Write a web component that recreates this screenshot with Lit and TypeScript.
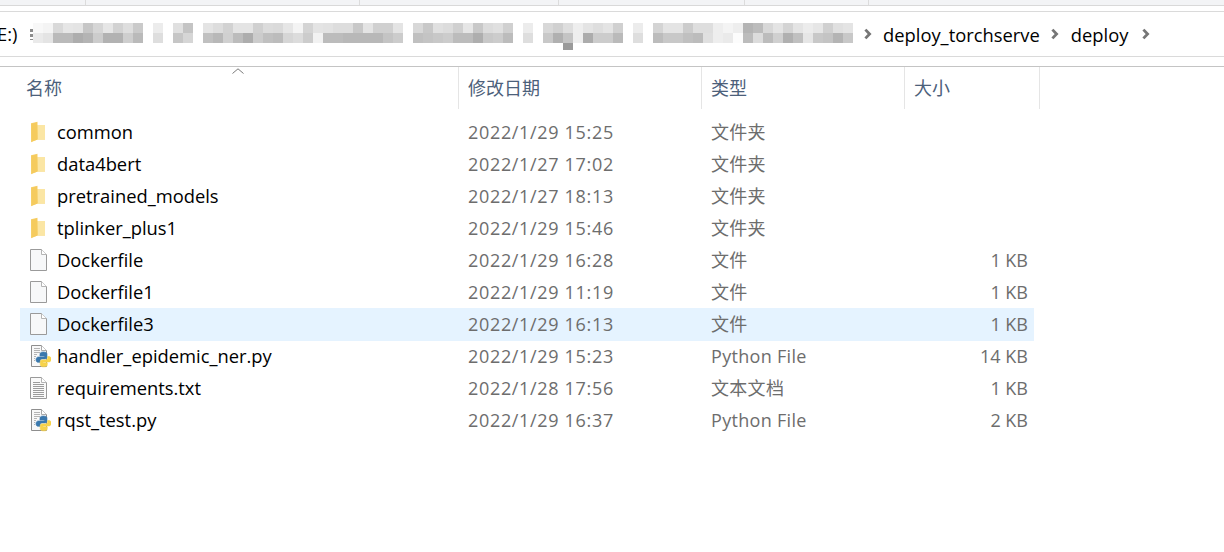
import { LitElement, html, css, svg } from "lit";
import { customElement } from "lit/decorators.js";

type Kind = "folder" | "file" | "py" | "txt";
const ROWS: { kind: Kind; name: string; date: string; type: string; size: string; sel?: boolean }[] = [
  { kind: "folder", name: "common", date: "2022/1/29 15:25", type: "文件夹", size: "" },
  { kind: "folder", name: "data4bert", date: "2022/1/27 17:02", type: "文件夹", size: "" },
  { kind: "folder", name: "pretrained_models", date: "2022/1/27 18:13", type: "文件夹", size: "" },
  { kind: "folder", name: "tplinker_plus1", date: "2022/1/29 15:46", type: "文件夹", size: "" },
  { kind: "file", name: "Dockerfile", date: "2022/1/29 16:28", type: "文件", size: "1 KB" },
  { kind: "file", name: "Dockerfile1", date: "2022/1/29 11:19", type: "文件", size: "1 KB" },
  { kind: "file", name: "Dockerfile3", date: "2022/1/29 16:13", type: "文件", size: "1 KB", sel: true },
  { kind: "py", name: "handler_epidemic_ner.py", date: "2022/1/29 15:23", type: "Python File", size: "14 KB" },
  { kind: "txt", name: "requirements.txt", date: "2022/1/28 17:56", type: "文本文档", size: "1 KB" },
  { kind: "py", name: "rqst_test.py", date: "2022/1/29 16:37", type: "Python File", size: "2 KB" },
];

const BLUR_TOP = (
  "f8 f4 d9 e6 e4 c6 d6 e6 d2 de ca ff ec ff e0 c4 ff e4 dd d2 e4 e4 d0 dc da e6 f4 d4 e4 e2 dd dd c8 e4 d0 d0 e4 ff d8 " +
  "c8 e0 dc d0 e6 c8 dc e0 d0 ff ec ff d8 d0 de ee e4 de e4 d0 ff ec ff d4 e4 e4 cc de de ee f4 ee b4 bc d8 e4 d4 e4 ec e6 d0 e0 e4"
).split(" ");
const BLUR_BOT = (
  "ea e4 ba ba ad b4 cc b2 b2 ce ba ff de ff c6 d6 ff c0 b8 d0 bc ad cc c0 bc d6 dc cc f2 bc bc b8 b8 b8 b8 c4 cc ff c0 " +
  "c4 c8 cc bc bc ae c8 cc bc ff de ff c8 b0 c4 ee ac cc cc ba ff de ff bc c8 c8 c0 bc e0 ee ea fc bc dc bc d0 b0 c0 e6 c8 c4 b4 c8"
).split(" ");

const folderIcon = svg`<svg class="ic" viewBox="0 0 24 24" width="24" height="24">
  <path d="M4 3.2 L10.5 1.8 V5 H18 V19.6 H10.5 L4 22.2 Z" fill="#f7d06a"/>
  <path d="M10.5 5 H18 V19.6 H10.5 Z" fill="#fbe6a4"/>
  <path d="M4.6 3.7 L10 2.6 L10.6 19.4 L5 21.4 Z" fill="#f5cb5e"/>
</svg>`;
const fileIcon = svg`<svg class="ic" viewBox="0 0 24 24" width="24" height="24">
  <path d="M3.5 1.5 H14.5 L19.5 6.5 V22.5 H3.5 Z" fill="#f7f8f9" stroke="#9a9a9a"/>
  <path d="M14.5 1.5 V6.5 H19.5" fill="#fff" stroke="#b5b5b5"/>
</svg>`;
const txtLines = [6, 8, 10, 12, 14, 16, 18, 20];
const txtIcon = svg`<svg class="ic" viewBox="0 0 24 24" width="24" height="24">
  <path d="M3.5 1.5 H14.5 L19.5 6.5 V22.5 H3.5 Z" fill="#fafafa" stroke="#9a9a9a"/>
  <path d="M14.5 1.5 V6.5 H19.5" fill="#fff" stroke="#b5b5b5"/>
  ${txtLines.map((y) => svg`<rect x="6" y="${y}" width="${y < 8 ? 7 : 11}" height="1" fill="#9c9c9c"/>`)}
</svg>`;
const pyIcon = svg`<svg class="ic" viewBox="0 0 24 24" width="24" height="24">
  <path d="M4.5 1.5 H14.5 L19.5 6.5 V22.5 H4.5 Z" fill="#f8f8f8" stroke="#8e8e8e"/>
  <path d="M14.5 1.5 V6.5 H19.5" fill="#fff" stroke="#aaa"/>
  <path d="M7 4.5 H13 M7 6.5 H13 M7 8.5 H13 M7 10.5 H10 M7 12.5 H9 M7 14.5 H8 M7 16.5 H8" stroke="#b4b4b4"/>
  <g transform="translate(9 8) scale(.9) translate(-3.8 -7.5)">
    <path d="M12 7.5 C9 7.5 8.2 8.6 8.2 10 V12 H13 V13 H6.5 C4.8 13 3.8 14.3 3.8 16 C3.8 17.8 4.8 19 6.5 19 H8.4 V17.2 C8.4 16 9.4 15.2 10.5 15.2 H14 C15.2 15.2 16 14.4 16 13.4 V10 C16 8.4 14.6 7.5 12 7.5 Z" fill="#3a78ad" stroke="#3a78ad" stroke-width=".7"/>
    <path d="M12.5 24 C15.5 24 16.3 22.9 16.3 21.5 V19.5 H11.5 V18.5 H18 C19.7 18.5 20.7 17.2 20.7 15.5 C20.7 13.7 19.7 12.5 18 12.5 H16.8 V14.3 C16.8 15.5 15.8 16.3 14.7 16.3 H10.5 C9.3 16.3 8.5 17.1 8.5 18.1 V21.5 C8.5 23.1 9.9 24 12.5 24 Z" fill="#f7d34b" stroke="#f7d34b" stroke-width=".7"/>
  </g>
</svg>`;
const ICONS: Record<Kind, unknown> = { folder: folderIcon, file: fileIcon, txt: txtIcon, py: pyIcon };

const chevron = html`<svg class="chev" viewBox="0 0 8 12" width="8" height="12"><path d="M1.4 1.6 L5.6 6 L1.4 10.4" fill="none" stroke="#767676" stroke-width="2.8"/></svg>`;

@customElement("app-root")
export class AppRoot extends LitElement {
  static styles = css`
    :host {
      display: block;
      width: 1224px;
      height: 552px;
      overflow: hidden;
      background: #fff;
      font-family: "Open Sans", "Noto Sans CJK SC", sans-serif;
      font-size: 18px;
      color: #000;
    }
    .tabs {
      height: 5px;
      background: #f3f4f6;
      border-bottom: 1px solid #d9d9d9;
      display: grid;
      grid-template-columns: 86px 274px 199px 186px 124px 1fr;
    }
    .tabs span { border-right: 1px solid #dcdcdc; }
    .tabs span:last-child { border-right: 0; }
    .gap1 { height: 5px; border-bottom: 1px solid #dadada; }
    .addr {
      height: 44px;
      border-bottom: 1px solid #dadada;
      display: flex;
      align-items: center;
      overflow: hidden;
      white-space: nowrap;
      font-size: 18.35px;
    }
    .drive { margin-left: -3px; width: 36px; flex: none; line-height: 44px; position: relative; }
    .dots { position: absolute; left: 33px; top: 17px; width: 3px; height: 11px; background: repeating-linear-gradient(#8c8c8c 0 3px, #fff 3px 5px); }
    .blur { position: relative; width: 820px; height: 20px; display: grid; grid-template-columns: repeat(82, 10px); grid-auto-rows: 10px; flex: none; margin-bottom: 2px; }
    .smudge { position: absolute; left: 530px; top: 20px; width: 10px; height: 7px; background: #9a9a9a; }
    .chev { flex: none; display: block; }
    .sep { display: flex; flex: none; }
    .c1 { margin-left: 11px; margin-right: 11px; }
    .c2 { margin-left: 11px; margin-right: 12px; }
    .c3 { margin-left: 14px; }
    .gap2 { height: 9px; border-bottom: 1px solid #c4c4c4; }
    .head {
      position: relative;
      height: 40px;
      display: grid;
      grid-template-columns: 459px 243px 203px 135px;
      width: 1040px;
      color: #4c607a;
      margin-bottom: 9px;
    }
    .hc { border-right: 1px solid #e5e5e5; padding-left: 9px; line-height: 42px; box-sizing: border-box; }
    .hc:first-child { padding-left: 26px; }
    .caret { position: absolute; left: 232px; top: 1px; }
    .rows { margin-left: 20px; width: 1014px; }
    .row {
      height: 32px;
      display: grid;
      grid-template-columns: 37px 411px 243px 194px 1fr;
      align-items: center;
      padding-right: 6px;
      box-sizing: border-box;
      line-height: 32px;
    }
    .row.sel { background: #e5f3ff; height: 33px; margin-bottom: -1px; align-items: start; }
    .iconcell { display: flex; padding-left: 7px; height: 24px; }
    .row.sel .iconcell { margin-top: 4px; }
    .ic { display: block; }
    .name { font-size: 18.35px; }
    .date { color: #6d6d6d; letter-spacing: 0.67px; }
    .type { color: #6d6d6d; letter-spacing: 0.3px; }
    .size { color: #6d6d6d; text-align: right; }
  `;

  render() {
    return html`
      <div class="tabs"><span></span><span></span><span></span><span></span><span></span><span></span></div>
      <div class="gap1"></div>
      <div class="addr">
        <span class="drive">E:)<i class="dots"></i></span>
        <div class="blur">
          ${BLUR_TOP.concat(BLUR_BOT).map((c) => html`<i style="background:#${c}${c}${c}"></i>`)}
          <i class="smudge"></i>
        </div>
        <span class="sep c1">${chevron}</span>
        <span>deploy_torchserve</span>
        <span class="sep c2">${chevron}</span>
        <span>deploy</span>
        <span class="sep c3">${chevron}</span>
      </div>
      <div class="gap2"></div>
      <div class="head">
        <div class="hc">名称</div>
        <div class="hc">修改日期</div>
        <div class="hc">类型</div>
        <div class="hc">大小</div>
        <svg class="caret" viewBox="0 0 12 6" width="12" height="6"><path d="M0.5 5.5 L6 0.8 L11.5 5.5" fill="none" stroke="#7a7a7a"/></svg>
      </div>
      <div class="rows">
        ${ROWS.map(
          (r) => html`<div class="row ${r.sel ? "sel" : ""}">
            <div class="iconcell">${ICONS[r.kind]}</div>
            <div class="name">${r.name}</div>
            <div class="date">${r.date}</div>
            <div class="type">${r.type}</div>
            <div class="size">${r.size}</div>
          </div>`
        )}
      </div>
    `;
  }
}
